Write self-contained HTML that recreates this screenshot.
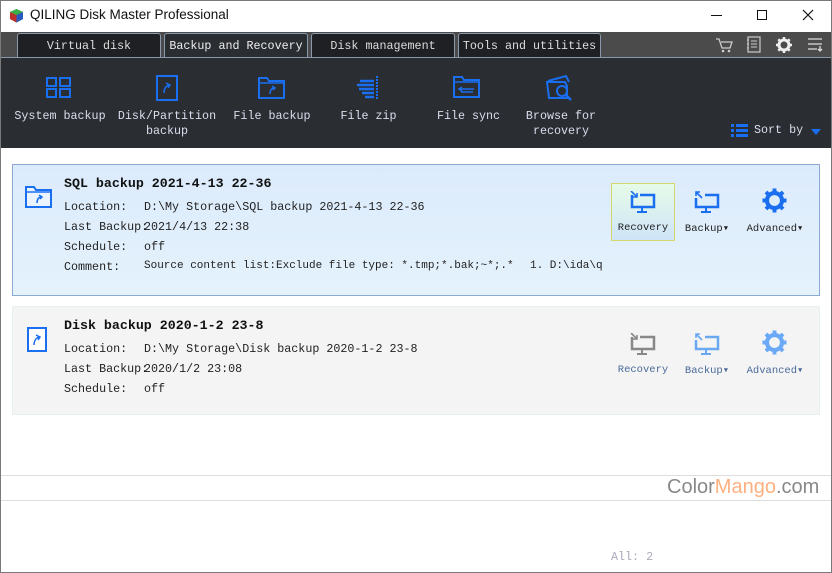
<!DOCTYPE html>
<html><head><meta charset="utf-8"><style>
*{margin:0;padding:0;box-sizing:border-box}
body{width:832px;height:573px;background:#fff;position:relative;overflow:hidden;font-family:"Liberation Mono",monospace;font-size:11.7px;color:#222}
.win{position:absolute;inset:0;border:1px solid #7a7a7a}
.a{position:absolute;white-space:pre}
.title{position:absolute;left:0;top:0;width:832px;height:32px;background:#fff}
.tabbar{position:absolute;left:1px;top:32px;width:830px;height:26px;background:#4b4b4b}
.tab{position:absolute;top:1px;height:25px;background:#1f2024;border:1px solid #8a98ad;border-bottom:none;border-radius:3px 3px 0 0;color:#ddd;font-size:11.7px;text-align:center;line-height:24px;white-space:nowrap;overflow:hidden}
.tab.on{background:#2a2d32;color:#eee}
.tool{position:absolute;left:1px;top:57px;width:830px;height:91px;background:#2a2d32;border-top:1px solid #8a98ad}
.tl{position:absolute;color:#dde;text-align:center;font-size:11.7px;line-height:15px;white-space:nowrap}
.card{position:absolute;left:12px;width:808px}
.bt{position:absolute;text-align:center;font-size:10.5px;white-space:nowrap}
</style></head><body>
<div class="title">
<svg class="a" style="left:9px;top:8px" width="15" height="15" viewBox="0 0 15 15"><path d="M7.5 1L14 4v7l-6.5 3.5L1 11V4z" fill="#2a8a3a"/><path d="M1 4l6.5 3v7.5L1 11z" fill="#c0302a"/><path d="M14 4l-6.5 3v7.5L14 11z" fill="#2a5ac0"/><path d="M7.5 1L14 4 7.5 7 1 4z" fill="#3cae4c"/></svg>
<div class="a" style="left:30px;top:7px;font-family:'Liberation Sans',sans-serif;font-size:13.5px;color:#111">QILING Disk Master Professional</div>
<div class="a" style="left:711px;top:15px;width:11px;height:1px;background:#111"></div>
<div class="a" style="left:757px;top:10px;width:10px;height:10px;border:1px solid #111"></div>
<svg class="a" style="left:802px;top:9px" width="12" height="12"><path d="M1 1l10 10M11 1L1 11" stroke="#111" stroke-width="1.2"/></svg>
</div>
<div class="tabbar">
<div class="tab" style="left:16px;width:144px">Virtual disk</div>
<div class="tab on" style="left:163px;width:144px">Backup and Recovery</div>
<div class="tab" style="left:310px;width:144px">Disk management</div>
<div class="tab" style="left:457px;width:143px">Tools and utilities</div>
<svg class="a" style="left:714px;top:4px" width="18" height="18"><path d="M1 3h3l3 9h8l2-6H6" fill="none" stroke="#ccc" stroke-width="1.3"/><circle cx="8" cy="15" r="1.3" fill="#ccc"/><circle cx="14" cy="15" r="1.3" fill="#ccc"/></svg>
<svg class="a" style="left:745px;top:4px" width="16" height="18"><rect x="2" y="1" width="12" height="15" fill="none" stroke="#ccc" stroke-width="1.2"/><path d="M5 5h6M5 8h6M5 11h6M1 4h2M1 8h2M1 12h2" stroke="#ccc"/></svg>
<svg class="a" style="left:774px;top:4px" width="18" height="18" viewBox="0 0 18 18"><circle cx="9" cy="9" r="5" fill="none" stroke="#eee" stroke-width="3"/><path d="M9 1v3M9 14v3M1 9h3M14 9h3M3.3 3.3l2 2M12.7 12.7l2 2M3.3 14.7l2-2M12.7 5.3l2-2" stroke="#eee" stroke-width="2.5"/></svg>
<svg class="a" style="left:806px;top:5px" width="16" height="16"><path d="M1 2h14M1 7h14M1 12h9M13 9v5M11 12l2 2 2-2" stroke="#ddd" stroke-width="1.3" fill="none"/></svg>
</div>
<div class="tool">
<svg class="a" style="left:45px;top:19px" width="25" height="21"><g fill="none" stroke="#1a6ff0" stroke-width="2"><rect x="1" y="1" width="9" height="8"/><rect x="14" y="1" width="10" height="8"/><rect x="1" y="12" width="9" height="8"/><rect x="14" y="12" width="10" height="8"/></g></svg>
<svg class="a" style="left:154px;top:17px" width="24" height="26"><rect x="2" y="1" width="20" height="24" fill="none" stroke="#1a6ff0" stroke-width="2"/><path d="M9 18c0-5 2-7 5-8M11 8l4 2-2 3" fill="none" stroke="#1a6ff0" stroke-width="1.5"/></svg>
<svg class="a" style="left:257px;top:19px" width="28" height="22"><path d="M1 1h8l2 3h15v17H1z" fill="none" stroke="#1a6ff0" stroke-width="2"/><path d="M1 6h25" stroke="#1a6ff0" stroke-width="1.5"/><path d="M12 17c0-4 2-6 4-6M14 9l3 2-2 2" fill="none" stroke="#1a6ff0" stroke-width="1.5"/></svg>
<svg class="a" style="left:355px;top:17px" width="26" height="26"><g stroke="#1a6ff0" stroke-width="2.5"><path d="M4 6h14M1 10h17M3 14h15M6 18h12M9 22h9"/></g><path d="M21 1v24" stroke="#1a6ff0" stroke-width="2" stroke-dasharray="2 1"/></svg>
<svg class="a" style="left:452px;top:18px" width="28" height="22"><path d="M1 1h8l2 3h15v17H1z" fill="none" stroke="#1a6ff0" stroke-width="2"/><path d="M1 6h25" stroke="#1a6ff0" stroke-width="1.5"/><path d="M7 13h14M9 11l-3 2 3 2M8 16h12" stroke="#1a6ff0" stroke-width="1.5" fill="none"/></svg>
<svg class="a" style="left:545px;top:17px" width="30" height="26"><path d="M2 6l18-5 3 6M1 7h18l2 4v12H3z" fill="none" stroke="#1a6ff0" stroke-width="2"/><circle cx="16" cy="16" r="5" fill="#2a2d32" stroke="#1a6ff0" stroke-width="2"/><path d="M20 20l5 5" stroke="#1a6ff0" stroke-width="2.5"/></svg>
<div class="tl" style="left:8px;width:102px;top:51px">System backup</div>
<div class="tl" style="left:112px;width:108px;top:51px">Disk/Partition<br>backup</div>
<div class="tl" style="left:226px;width:90px;top:51px">File backup</div>
<div class="tl" style="left:330px;width:75px;top:51px">File zip</div>
<div class="tl" style="left:425px;width:85px;top:51px">File sync</div>
<div class="tl" style="left:515px;width:90px;top:51px">Browse for<br>recovery</div>
<svg class="a" style="left:730px;top:66px" width="17" height="14"><g fill="#1a6ff0"><rect x="0" y="0" width="3" height="3"/><rect x="5" y="0" width="12" height="3"/><rect x="0" y="5" width="3" height="3"/><rect x="5" y="5" width="12" height="3"/><rect x="0" y="10" width="3" height="3"/><rect x="5" y="10" width="12" height="3"/></g></svg>
<div class="tl" style="left:753px;top:65px;text-align:left">Sort by</div>
<svg class="a" style="left:810px;top:71px" width="10" height="6"><path d="M0 0h10L5 6z" fill="#1a6ff0"/></svg>
</div>

<div class="card" style="top:164px;height:132px;background:linear-gradient(#dcebfc,#e4f2fc);border:1px solid #8aaad0"></div>
<svg class="a" style="left:25px;top:185px" width="27" height="23"><path d="M1 2h8l2 3h15v17H1z" fill="#eaf3fe" stroke="#1a6ff0" stroke-width="2"/><path d="M1 7h25" stroke="#1a6ff0" stroke-width="1.5"/><path d="M12 18c0-4 2-6 4-6M14 10l3 2-2 2" fill="none" stroke="#1a6ff0" stroke-width="1.5"/></svg>
<div class="a" style="left:64px;top:176px;font-weight:bold;font-size:13.3px;color:#111">SQL backup 2021-4-13 22-36</div>
<div class="a" style="left:64px;top:200px">Location:</div><div class="a" style="left:144px;top:200px">D:\My Storage\SQL backup 2021-4-13 22-36</div>
<div class="a" style="left:64px;top:220px">Last Backup:</div><div class="a" style="left:144px;top:220px">2021/4/13 22:38</div>
<div class="a" style="left:64px;top:240px">Schedule:</div><div class="a" style="left:144px;top:240px">off</div>
<div class="a" style="left:64px;top:260px">Comment:</div>
<div class="a" style="left:144px;top:260px;font-size:11px">Source content list:</div>
<div class="a" style="left:276px;top:260px;font-size:11px">Exclude file type: *.tmp;*.bak;~*;.*</div>
<div class="a" style="left:530px;top:260px;font-size:11px">1. D:\ida\q</div>
<div class="a" style="left:611px;top:183px;width:64px;height:58px;border:1px solid #d4d86a;background:linear-gradient(#e6fbe8,#cfe4f8)"></div>
<svg class="a" style="left:628px;top:191px" width="28" height="22"><path d="M4 4v12h22V4H12" fill="none" stroke="#1a6ff0" stroke-width="2.5"/><path d="M14 16v4M9 21h10" stroke="#1a6ff0" stroke-width="2"/><path d="M3 0l6 6M9 2v4H5" stroke="#1a6ff0" stroke-width="1.6" fill="none"/></svg>
<svg class="a" style="left:692px;top:191px" width="28" height="22"><path d="M4 7v9h22V4H13" fill="none" stroke="#1a6ff0" stroke-width="2.5"/><path d="M14 16v4M9 21h10" stroke="#1a6ff0" stroke-width="2"/><path d="M10 7L4 1M4 5V1h4" stroke="#1a6ff0" stroke-width="1.6" fill="none"/></svg>
<svg class="a" style="left:761px;top:187px" width="27" height="27" viewBox="0 0 18 18"><circle cx="9" cy="9" r="5" fill="none" stroke="#1a6ff0" stroke-width="2.8"/><path d="M9 1v3M9 14v3M1 9h3M14 9h3M3.3 3.3l2 2M12.7 12.7l2 2M3.3 14.7l2-2M12.7 5.3l2-2" stroke="#1a6ff0" stroke-width="2.6"/></svg>
<div class="bt" style="left:611px;width:64px;top:222px">Recovery</div>
<div class="bt" style="left:678px;width:58px;top:222px">Backup▾</div>
<div class="bt" style="left:740px;width:70px;top:222px">Advanced▾</div>

<div class="card" style="top:306px;height:109px;background:#f4f4f4;border:1px solid #e6f0f0"></div>
<svg class="a" style="left:27px;top:327px" width="20" height="25"><rect x="1" y="1" width="18" height="23" fill="#fff" stroke="#1a6ff0" stroke-width="2"/><path d="M7 18c0-4 2-7 5-8M9 8l4 2-2 3" fill="none" stroke="#1a6ff0" stroke-width="1.5"/></svg>
<div class="a" style="left:64px;top:318px;font-weight:bold;font-size:13.3px;color:#111">Disk backup 2020-1-2 23-8</div>
<div class="a" style="left:64px;top:342px">Location:</div><div class="a" style="left:144px;top:342px">D:\My Storage\Disk backup 2020-1-2 23-8</div>
<div class="a" style="left:64px;top:362px">Last Backup:</div><div class="a" style="left:144px;top:362px">2020/1/2 23:08</div>
<div class="a" style="left:64px;top:382px">Schedule:</div><div class="a" style="left:144px;top:382px">off</div>
<svg class="a" style="left:628px;top:333px" width="28" height="22"><path d="M4 4v12h22V4H12" fill="none" stroke="#888" stroke-width="2.5"/><path d="M14 16v4M9 21h10" stroke="#888" stroke-width="2"/><path d="M3 0l6 6M9 2v4H5" stroke="#888" stroke-width="1.6" fill="none"/></svg>
<svg class="a" style="left:692px;top:333px" width="28" height="22"><path d="M4 7v9h22V4H13" fill="none" stroke="#6aa8f0" stroke-width="2.5"/><path d="M14 16v4M9 21h10" stroke="#6aa8f0" stroke-width="2"/><path d="M10 7L4 1M4 5V1h4" stroke="#6aa8f0" stroke-width="1.6" fill="none"/></svg>
<svg class="a" style="left:761px;top:329px" width="27" height="27" viewBox="0 0 18 18"><circle cx="9" cy="9" r="5" fill="none" stroke="#6aa8f8" stroke-width="2.8"/><path d="M9 1v3M9 14v3M1 9h3M14 9h3M3.3 3.3l2 2M12.7 12.7l2 2M3.3 14.7l2-2M12.7 5.3l2-2" stroke="#6aa8f8" stroke-width="2.6"/></svg>
<div class="bt" style="left:611px;width:64px;top:364px;color:#4a6a9a">Recovery</div>
<div class="bt" style="left:678px;width:58px;top:364px;color:#4a6a9a">Backup▾</div>
<div class="bt" style="left:740px;width:70px;top:364px;color:#4a6a9a">Advanced▾</div>

<div class="a" style="left:1px;top:475px;width:830px;height:1px;background:#ddd"></div>
<div class="a" style="left:1px;top:500px;width:830px;height:1px;background:#ddd"></div>
<div class="a" style="left:667px;top:476px;font-family:'Liberation Sans',sans-serif;font-size:20px;color:#888">Color<span style="color:#ffb080">Mango</span>.com</div>
<div class="a" style="left:611px;top:550px;color:#aab;font-size:11.7px">All: 2</div>
<div class="win"></div>
</body></html>
